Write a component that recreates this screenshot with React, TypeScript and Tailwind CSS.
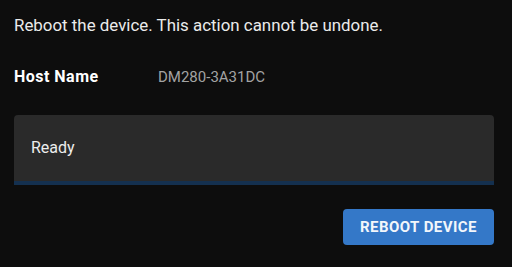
export default function App() {
  return (
    <div className="min-h-screen w-full bg-[#0d0d0d] font-['Roboto',sans-serif] text-white">
      <div className="pl-[14px] pr-[18px] pt-[14px]">
        <p className="text-[16.9px] leading-[22px] text-[#ebebeb]">
          Reboot the device. This action cannot be undone.
        </p>

        <div className="mt-[30px] flex items-baseline leading-[22px]">
          <span className="w-[144px] text-[16px] font-bold tracking-[0.03em] text-white">Host Name</span>
          <span className="text-[15px] text-[#a3a3a3]">DM280-3A31DC</span>
        </div>

        <div className="mt-[27px] flex h-[70px] items-center rounded-t-[4px] border-b-[4px] border-[#14304f] bg-[#2a2a2a] px-[17px]">
          <span className="text-[16px] text-[#ededed]">Ready</span>
        </div>

        <div className="mt-[24px] flex justify-end">
          <button className="h-[36px] w-[151px] rounded-[4px] bg-[#3478c8] text-[15px] font-bold uppercase tracking-[0.03em] text-[#f2f6fb]">
            Reboot Device
          </button>
        </div>
      </div>
    </div>
  );
}
